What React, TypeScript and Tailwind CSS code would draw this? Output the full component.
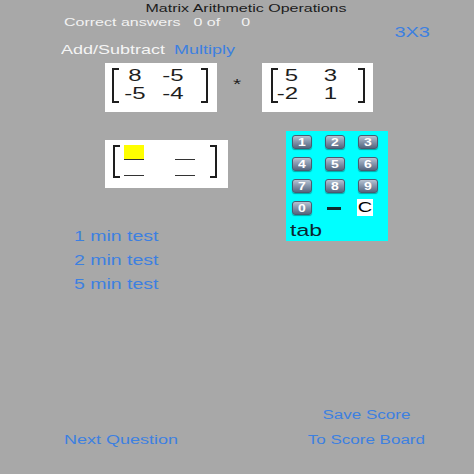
import React from 'react';

// text in the shot is squashed vertically, so every label gets a y-scale
const T: React.FC<{ className?: string; children: React.ReactNode }> = ({ className, children }) => (
  <span className={`inline-block scale-y-[0.72] whitespace-nowrap ${className ?? ''}`}>{children}</span>
);

const Bracket: React.FC<{ side: 'left' | 'right'; className?: string }> = ({ side, className }) => (
  <div
    className={`w-[7px] border-[#1e1e1e] border-y-2 ${side === 'left' ? 'border-l-2' : 'border-r-2'} ${className ?? ''}`}
  />
);

const Key: React.FC<{ n: string }> = ({ n }) => (
  <div className="w-[20px] h-[14px] rounded-[3px] bg-linear-to-b from-[#b7c3d2] via-[#8393aa] to-[#56677f] border border-[#4a5a70] flex items-center justify-center text-white font-bold text-[14px] leading-[14px] shadow-[0_1px_1px_rgba(0,0,0,0.35)]">
    <T>{n}</T>
  </div>
);

const MatrixA: React.FC = () => (
  <div className="w-[112px] h-[49px] bg-white flex items-start pl-[7px] pr-[9px]">
    <Bracket side="left" className="h-[35px] mt-[5px]" />
    <div className="mt-[3px] text-[24px] leading-[18px] text-[#1e1e1e]">
      <div className="flex">
        <div className="w-[32px] text-center"><T>8</T></div>
        <div className="w-[44px] text-center"><T>-5</T></div>
      </div>
      <div className="flex">
        <div className="w-[32px] text-center"><T>-5</T></div>
        <div className="w-[44px] text-center"><T>-4</T></div>
      </div>
    </div>
    <Bracket side="right" className="h-[35px] mt-[5px] ml-auto" />
  </div>
);

const MatrixB: React.FC = () => (
  <div className="w-[111px] h-[49px] bg-white flex items-start pl-[9px] pr-[8px]">
    <Bracket side="left" className="h-[35px] mt-[5px]" />
    <div className="mt-[3px] text-[24px] leading-[18px] text-[#1e1e1e]">
      <div className="flex">
        <div className="w-[26px] -ml-[6px] text-right"><T>5</T></div>
        <div className="w-[39px] text-right"><T>3</T></div>
      </div>
      <div className="flex">
        <div className="w-[26px] -ml-[6px] text-right"><T>-2</T></div>
        <div className="w-[39px] text-right"><T>1</T></div>
      </div>
    </div>
    <Bracket side="right" className="h-[35px] mt-[5px] ml-auto" />
  </div>
);

const AnswerBox: React.FC = () => (
  <div className="w-[123px] h-[48px] bg-white flex items-start pl-[8px] pr-[11px] pt-[5px]">
    <Bracket side="left" className="h-[33px] w-[6px]" />
    <div className="ml-[4px] flex flex-col">
      <div className="flex gap-[31px]">
        <div className="w-[20px] h-[15px] bg-[#ffff00] border-b-[1.5px] border-[#333]" />
        <div className="w-[20px] h-[15px] border-b-[1.5px] border-[#333]" />
      </div>
      <div className="flex gap-[31px]">
        <div className="w-[20px] h-[16px] border-b-[1.5px] border-[#333]" />
        <div className="w-[20px] h-[16px] border-b-[1.5px] border-[#333]" />
      </div>
    </div>
    <Bracket side="right" className="h-[33px] ml-auto" />
  </div>
);

const Keypad: React.FC = () => (
  <div className="w-[102px] h-[110px] bg-[#00ffff] pt-[4px] pl-[6px]">
    <div className="grid grid-cols-[20px_20px_20px] gap-x-[13px] gap-y-[8px]">
      {['1', '2', '3', '4', '5', '6', '7', '8', '9'].map(n => (
        <Key key={n} n={n} />
      ))}
      <Key n="0" />
      <div className="flex items-center">
        <div className="ml-[2px] w-[14px] h-[3px] bg-[#0d2f33]" />
      </div>
      <div className="-ml-[1px] -mt-[2px] -mb-[1px] w-[16px] h-[17px] bg-white flex items-center justify-center text-[20px] leading-[17px] text-black">
        <T>C</T>
      </div>
    </div>
    <div className="-ml-[2px] mt-[5px] text-[23px] leading-[20px] text-[#0b2530]">
      <T>tab</T>
    </div>
  </div>
);

export default function App() {
  return (
    <div className="w-[474px] h-[474px] bg-[#a8a8a8] flex flex-col font-['Liberation_Sans',Arial,sans-serif] overflow-hidden">
      <div className="h-[16px] pl-[18px] text-center text-[16px] leading-[16px] text-[#1c1c1c]">
        <T>Matrix Arithmetic Operations</T>
      </div>

      <div className="h-[28px] flex justify-between items-start">
        <div className="pl-[64px] flex text-[16px] leading-[12px] text-[#f2f2f2]">
          <T>Correct answers</T>
          <T className="ml-[13px]">0 of</T>
          <T className="ml-[21px]">0</T>
        </div>
        <div className="mt-[10px] pr-[44px] text-[20px] leading-[12px] text-[#3d80e0]">
          <T>3X3</T>
        </div>
      </div>

      <div className="h-[12px] pl-[61px] flex text-[18px] leading-[12px]">
        <T className="text-[#f5f5f5]">Add/Subtract</T>
        <T className="ml-[9px] text-[#3d80e0]">Multiply</T>
      </div>

      <div className="mt-[7px] pl-[105px] flex items-start">
        <MatrixA />
        <div className="ml-[16px] mt-[11px] w-[8px] text-[21px] leading-[20px] text-[#1e1e1e]">
          <T>*</T>
        </div>
        <div className="ml-[21px]">
          <MatrixB />
        </div>
      </div>

      <div className="pl-[74px] flex items-start">
        <div className="w-[154px] flex flex-col">
          <div className="ml-[31px] mt-[28px]">
            <AnswerBox />
          </div>
          <div className="mt-[36px] text-[19.5px] leading-[24px] text-[#3d80e0]">
            <div className="h-[24px]"><T>1 min test</T></div>
            <div className="h-[24px]"><T>2 min test</T></div>
            <div className="h-[24px]"><T>5 min test</T></div>
          </div>
        </div>
        <div className="ml-[58px] mt-[19px]">
          <Keypad />
        </div>
      </div>

      <div className="mt-auto pb-[25px] pl-[64px] pr-[49px] flex justify-between items-end text-[#3d80e0]">
        <div className="text-[18px] leading-[18px]">
          <T>Next Question</T>
        </div>
        <div className="flex flex-col items-center gap-[7px] text-[17px] leading-[18px]">
          <T>Save Score</T>
          <T>To Score Board</T>
        </div>
      </div>
    </div>
  );
}
